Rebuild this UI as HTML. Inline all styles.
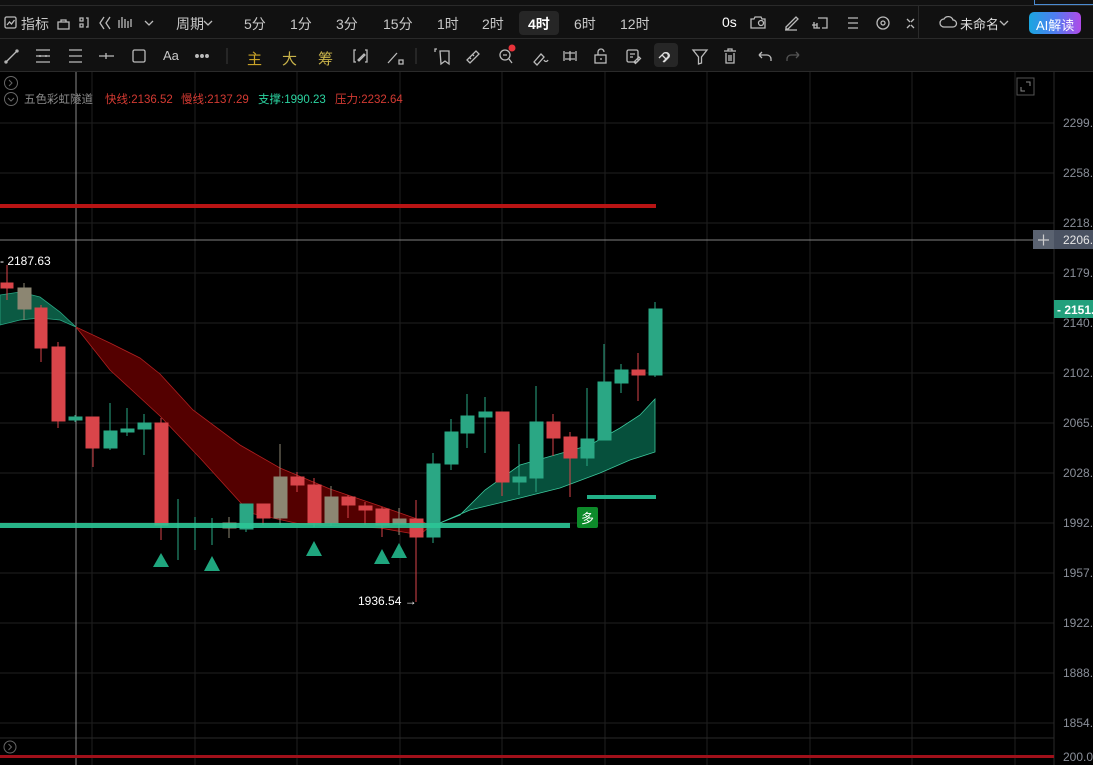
<!DOCTYPE html>
<html><head><meta charset="utf-8"><style>
*{margin:0;padding:0;box-sizing:border-box}
body{width:1093px;height:765px;background:#000;overflow:hidden;font-family:"Liberation Sans","Noto Sans CJK SC",sans-serif;color:#c8c8c8;position:relative}
.bar{position:absolute;left:0;width:1093px;background:#111}
#r1{top:5px;height:34px;border-top:1px solid #2a2a2a;border-bottom:1px solid #2a2a2a}
#r2{top:39px;height:33px;border-bottom:1px solid #2a2a2a}
.t{position:absolute;font-size:14px;color:#c8c8c8;white-space:nowrap}
svg{position:absolute;left:0;top:0}
</style></head><body>
<div class="bar" id="r1"></div>
<div class="bar" id="r2"></div>
<div style="position:absolute;left:0;top:0;width:1093px;height:5px;background:#111"></div>
<div style="position:absolute;left:1034px;top:0;width:59px;height:5px;border:1px solid #4a8ad0;border-right:none;border-top:none"></div>
<span class="t" style="left:21px;top:14px;font-size:14px">指标</span>
<span class="t" style="left:176px;top:14px">周期</span>
<span class="t" style="left:244px;top:14px">5分</span>
<span class="t" style="left:290px;top:14px">1分</span>
<span class="t" style="left:336px;top:14px">3分</span>
<span class="t" style="left:383px;top:14px">15分</span>
<span class="t" style="left:437px;top:14px">1时</span>
<span class="t" style="left:482px;top:14px">2时</span>
<div style="position:absolute;left:519px;top:11px;width:40px;height:24px;background:#262626;border-radius:4px"></div>
<span class="t" style="left:528px;top:14px;color:#fff;font-weight:bold">4时</span>
<span class="t" style="left:574px;top:14px">6时</span>
<span class="t" style="left:620px;top:14px">12时</span>
<span class="t" style="left:722px;top:14px;color:#fff">0s</span>
<div style="position:absolute;left:918px;top:6px;width:1px;height:33px;background:#2a2a2a"></div>
<span class="t" style="left:960px;top:14px;color:#ddd;font-size:13px">未命名</span>
<div style="position:absolute;left:1029px;top:12px;width:52px;height:22px;border-radius:5px;background:linear-gradient(90deg,#1aa6e0,#4f7df0,#b04ae8)"></div>
<span class="t" style="left:1036px;top:15px;color:#fff;font-size:13px">AI解读</span>
<span class="t" style="left:247px;top:48px;color:#c9a227;font-size:15px">主</span>
<span class="t" style="left:282px;top:48px;color:#c9b34a;font-size:15px">大</span>
<span class="t" style="left:318px;top:48px;color:#c9b34a;font-size:15px">筹</span>
<span class="t" style="left:163px;top:48px;font-size:13px">Aa</span>
<div style="position:absolute;left:654px;top:43px;width:24px;height:24px;background:#262626;border-radius:4px"></div>
<svg width="1093" height="72" style="z-index:2" fill="none" stroke="#bbb" stroke-width="1.3">
<rect x="5" y="17" width="11" height="11" rx="1.5"/><path d="M7 25l2.5-3 2 2 3-4"/>
<path d="M58 22h11v7H58zM61 22v-2h5v2"/>
<path d="M80 18h3v3h-3zM80 24h3v3h-3zM86 18h2v9h-2"/>
<path d="M104 17l-4 6 4 6M110 17l-4 6 4 6"/>
<path d="M119 20v8M122 17v11M125 19v9M128 21v7M131 19v8"/>
<path d="M145 21l4 4 4-4M204 21l4 4 4-4M1000 21l4 4 4-4"/>
<path d="M755 17h6l1 2h3v9h-14v-9h3z"/><circle cx="761" cy="23" r="2.5"/>
<path d="M786 27l10-10 2 2-10 10h-2zM785 30h12"/>
<path d="M818 18h9v10h-5M814 22v6h6M817 25h-5M817 23v5"/>
<path d="M848 18h10M848 23h10M848 28h10"/>
<circle cx="883" cy="23" r="6"/><circle cx="883" cy="23" r="2"/>
<path d="M907 19l3 3M914 19l-3 3M907 28l3-3M914 28l-3-3"/>
<path d="M944 27a4 4 0 010-8 5 5 0 019 1 3.5 3.5 0 010 7z"/>
<path d="M6 62l11-11"/><circle cx="6" cy="62" r="1"/><circle cx="17" cy="51" r="1"/>
<path d="M36 50h14M36 56h14M36 62h14M40 55v2M46 55v2"/>
<path d="M69 50h13M69 56h13M69 62h13"/>
<path d="M99 56h15M106 53v6"/>
<rect x="133" y="50" width="12" height="12" rx="1.5"/>
<circle cx="197" cy="56" r="1.3" fill="#bbb"/><circle cx="202" cy="56" r="1.3" fill="#bbb"/><circle cx="207" cy="56" r="1.3" fill="#bbb"/>
<path d="M227 48v16" stroke="#333"/>
<path d="M356 50h-2v12h2M365 50h2v12h-2M358 60l6-6 1 1-6 6z"/>
<path d="M388 63l9-10M399 60h4v4h-4z"/>
<path d="M416 48v16" stroke="#333"/>
<path d="M437 49h-2v3M440 51h9v13l-4-3-4 3z"/>
<path d="M467 60l9-9 3 3-9 9zM470 58l1 1M473 55l1 1"/>
<circle cx="505" cy="55" r="5"/><path d="M509 59l3 4M503 55h4"/><circle cx="512" cy="48" r="3.5" fill="#e8333a" stroke="none"/>
<path d="M534 62l7-8 3 3-7 8zM544 60c1 2 3 2 4 0"/>
<path d="M564 51v10M570 51v10M576 51v10M565 53h10M565 59h10"/>
<rect x="595" y="55" width="11" height="8"/><path d="M598 55v-3a3 3 0 016 0"/><path d="M600 59h2"/>
<rect x="627" y="50" width="11" height="12" rx="1.5"/><path d="M630 54h5M630 57h3M634 62l5-5 1.5 1.5-5 5z"/>
<path d="M659 58l5-5a3 3 0 014 4l-5 5M662 55l4 4M664 62l5-5a3 3 0 00-4-4" stroke="#ddd"/>
<path d="M693 50h14l-5.5 7v6l-3 1v-7z"/>
<path d="M724 51h12M728 51v-2h4v2M726 53v10h8v-10M729 55v6M731 55v6"/>
<path d="M759 55h8a4 4 0 014 4v2M759 55l3-3M759 55l3 3"/>
<path d="M799 55h-8a4 4 0 00-4 4v2M799 55l-3-3M799 55l-3 3" stroke="#555"/>
</svg>
<svg width="1093" height="765" viewBox="0 0 1093 765" style="z-index:1">
<g stroke="#1f1f1f" stroke-width="1">
<path d="M92 72V765M195 72V765M297 72V765M400 72V765M502 72V765M605 72V765M707 72V765M810 72V765M912 72V765M1015 72V765"/>
<path d="M0 123H1054M0 173H1054M0 223H1054M0 273H1054M0 323H1054M0 373H1054M0 423H1054M0 473H1054M0 523H1054M0 573H1054M0 623H1054M0 673H1054M0 723H1054"/>
</g>
<path d="M1054 72V765" stroke="#2a2a2a"/>
<path d="M0 738H1054" stroke="#2a2a2a"/>
<path d="M76 72V765" stroke="#aaa" stroke-width="0.8"/>
<path d="M0 240H1034" stroke="#aaa" stroke-width="0.8"/>
<path d="M0 295L20 292L40 297L60 312L76 327L60 320L40 318L20 320L0 325Z" fill="#0b5a43" stroke="#2aa784" stroke-width="0.8"/>
<path d="M76 327L110 343L140 358L160 374L193 410L240 445L280 468L330 489L380 506L420 520L430 526L420 535L380 528L300 524L250 513L200 458L160 416L110 370Z" fill="#540000" stroke="#b02020" stroke-width="0.8"/>
<path d="M435 525L460 515L485 490L520 465L555 455L590 445L620 428L640 415L655 399L655 452L630 460L600 473L560 488L520 498L470 510Z" fill="#06503c" stroke="#3cc79c" stroke-width="0.8"/>
<rect x="0" y="204" width="656" height="4" fill="#b81414"/>
<rect x="0" y="755" width="1054" height="3" fill="#a0101a"/>
<g stroke-width="1">
<g stroke="#d9454a" fill="#d9454a">
<path d="M7 265V300"/><rect x="1" y="283" width="12" height="5"/>
<path d="M41 305V362"/><rect x="35" y="308" width="12" height="40"/>
<path d="M58 342V428"/><rect x="52" y="347" width="13" height="74"/>
<path d="M93 417V467"/><rect x="86" y="417" width="13" height="31"/>
<path d="M161 418V540"/><rect x="155" y="423" width="13" height="102"/>
<path d="M263 504V525"/><rect x="257" y="504" width="13" height="14"/>
<path d="M297 472V492"/><rect x="291" y="477" width="13" height="8"/>
<path d="M314 478V527"/><rect x="308" y="485" width="13" height="38"/>
<path d="M348 495V518"/><rect x="342" y="497" width="13" height="8"/>
<path d="M365 502V525"/><rect x="359" y="506" width="13" height="4"/>
<path d="M382 507V537"/><rect x="376" y="509" width="13" height="16"/>
<path d="M416 500V602"/><rect x="410" y="519" width="13" height="18"/>
<path d="M502 412V496"/><rect x="496" y="412" width="13" height="70"/>
<path d="M553 414V456"/><rect x="547" y="422" width="13" height="16"/>
<path d="M570 432V497"/><rect x="564" y="437" width="13" height="21"/>
<path d="M638 353V401"/><rect x="632" y="370" width="13" height="5"/>
</g>
<g stroke="#8c8672" fill="#8c8672">
<path d="M24 283V320"/><rect x="18" y="288" width="13" height="21"/>
<path d="M229 517V538"/><rect x="223" y="523" width="13" height="5"/>
<path d="M280 444V525"/><rect x="274" y="477" width="13" height="41"/>
<path d="M331 486V526"/><rect x="325" y="497" width="13" height="26"/>
<path d="M399 508V535"/><rect x="393" y="519" width="13" height="5"/>
</g>
<g stroke="#2aa784" fill="#2aa784">
<path d="M75 415V422"/><rect x="69" y="417" width="13" height="3"/>
<path d="M110 403V450"/><rect x="104" y="431" width="13" height="17"/>
<path d="M127 408V436"/><rect x="121" y="429" width="13" height="3"/>
<path d="M144 414V455"/><rect x="138" y="423" width="13" height="6"/>
<path d="M178 499V560"/>
<path d="M195 517V550"/>
<path d="M212 518V545"/>
<path d="M246 504V532"/><rect x="240" y="504" width="13" height="25"/>
<path d="M433 453V543"/><rect x="427" y="464" width="13" height="73"/>
<path d="M451 419V470"/><rect x="445" y="432" width="13" height="32"/>
<path d="M467 394V448"/><rect x="461" y="416" width="13" height="17"/>
<path d="M485 397V453"/><rect x="479" y="412" width="13" height="5"/>
<path d="M519 444V495"/><rect x="513" y="477" width="13" height="5"/>
<path d="M536 386V492"/><rect x="530" y="422" width="13" height="56"/>
<path d="M587 388V466"/><rect x="581" y="439" width="13" height="19"/>
<path d="M604 344V440"/><rect x="598" y="382" width="13" height="58"/>
<path d="M621 364V393"/><rect x="615" y="370" width="13" height="13"/>
<path d="M655 302V377"/><rect x="649" y="309" width="13" height="66"/>
</g>
</g>
<rect x="0" y="523" width="570" height="5" fill="#2bc596" opacity="0.9"/>
<rect x="587" y="495" width="69" height="4" fill="#22b088"/>
<rect x="577" y="507" width="21" height="21" rx="2" fill="#0d8a2a"/>
<text x="587.5" y="523" font-size="13" fill="#fff" text-anchor="middle" font-family="Noto Sans CJK SC,sans-serif">多</text>
<g fill="#1fa67e">
<path d="M153 567L161 553L169 567Z"/><path d="M204 571L212 556L220 571Z"/><path d="M306 556L314 541L322 556Z"/><path d="M374 564L382 549L390 564Z"/><path d="M391 558L399 543L407 558Z"/>
</g>
<text x="0" y="265" font-size="12" fill="#fff" font-family="Liberation Sans">- 2187.63</text>
<text x="358" y="605" font-size="12" fill="#fff" font-family="Liberation Sans">1936.54 →</text>
<g font-size="12" fill="#8a8f99" font-family="Liberation Sans">
<text x="1063" y="127">2299.</text><text x="1063" y="177">2258.</text><text x="1063" y="227">2218.</text><text x="1063" y="277">2179.</text><text x="1063" y="327">2140.</text><text x="1063" y="377">2102.</text><text x="1063" y="427">2065.</text><text x="1063" y="477">2028.</text><text x="1063" y="527">1992.</text><text x="1063" y="577">1957.</text><text x="1063" y="627">1922.</text><text x="1063" y="677">1888.</text><text x="1063" y="727">1854.</text><text x="1063" y="761">200.0</text>
</g>
<rect x="1033" y="230" width="21" height="19" fill="#5a6270"/>
<path d="M1038 240h11M1043.5 234.5v11" stroke="#ccc" stroke-width="1.2"/>
<rect x="1054" y="230" width="39" height="19" fill="#4a5262"/>
<text x="1063" y="244" font-size="12" fill="#e6e6e6" font-family="Liberation Sans">2206.</text>
<rect x="1054" y="300" width="39" height="18" fill="#22a07c"/>
<text x="1057" y="314" font-size="12" fill="#fff" font-weight="bold" font-family="Liberation Sans">- 2151.</text>
<rect x="1017" y="78" width="17" height="17" fill="none" stroke="#555"/>
<path d="M1021 87v4h4M1030 86v-4h-4" stroke="#888" fill="none"/>
<circle cx="11" cy="83" r="6.5" fill="none" stroke="#666"/><path d="M9 80l3 3-3 3" stroke="#666" fill="none"/>
<circle cx="11" cy="99" r="6.5" fill="none" stroke="#666"/><path d="M8 98l3 3 3-3" stroke="#666" fill="none"/>
<circle cx="10" cy="747" r="6" fill="none" stroke="#666"/><path d="M8.5 744l3 3-3 3" stroke="#666" fill="none"/>
<g font-size="11.5" font-family="Liberation Sans,Noto Sans CJK SC,sans-serif">
<text x="24" y="103" fill="#8a8a8a">五色彩虹隧道</text>
<text x="105" y="103" fill="#d43a32">快线:2136.52</text>
<text x="181" y="103" fill="#d43a32">慢线:2137.29</text>
<text x="258" y="103" fill="#2bd3a0">支撑:1990.23</text>
<text x="335" y="103" fill="#d43a32">压力:2232.64</text>
</g>
</svg>
</body></html>
